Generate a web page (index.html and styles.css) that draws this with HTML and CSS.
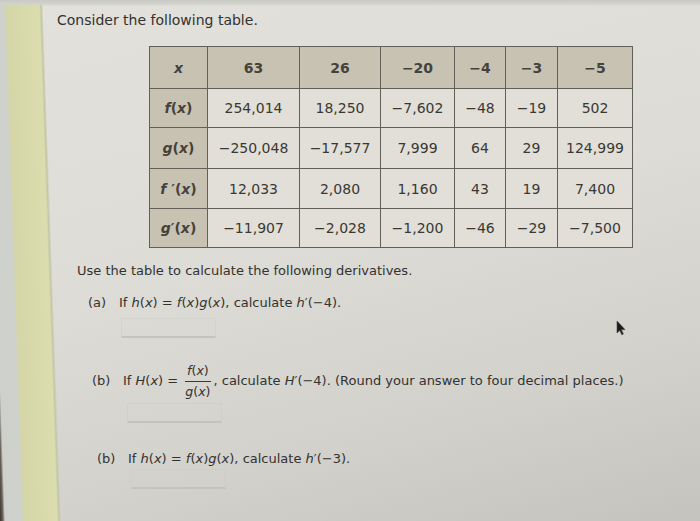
FILE: index.html
```html
<!DOCTYPE html>
<html lang="en">
<head>
<meta charset="utf-8">
<title>Consider the following table</title>
<link rel="stylesheet" href="styles.css">
</head>
<body>
<div class="screen">
  <div class="content">
    <p class="intro">Consider the following table.</p>
    <table class="data">
      <tr class="r-head">
        <th class="lab"><i>x</i></th><th>63</th><th>26</th><th>−20</th><th>−4</th><th>−3</th><th>−5</th>
      </tr>
      <tr class="r1">
        <th class="lab"><i>f</i>(<i>x</i>)</th><td>254,014</td><td>18,250</td><td>−7,602</td><td>−48</td><td>−19</td><td>502</td>
      </tr>
      <tr class="r2">
        <th class="lab"><i>g</i>(<i>x</i>)</th><td>−250,048</td><td>−17,577</td><td>7,999</td><td>64</td><td>29</td><td>124,999</td>
      </tr>
      <tr class="r3">
        <th class="lab"><i>f</i> ′(<i>x</i>)</th><td>12,033</td><td>2,080</td><td>1,160</td><td>43</td><td>19</td><td>7,400</td>
      </tr>
      <tr class="r4">
        <th class="lab"><i>g</i>′(<i>x</i>)</th><td>−11,907</td><td>−2,028</td><td>−1,200</td><td>−46</td><td>−29</td><td>−7,500</td>
      </tr>
    </table>
    <p class="prompt">Use the table to calculate the following derivatives.</p>

    <div class="part part-a">
      <div class="q"><span class="lbl">(a)</span>If <i>h</i>(<i>x</i>) = <i>f</i>(<i>x</i>)<i>g</i>(<i>x</i>), calculate <i>h</i>′(−4).</div>
      <div class="answer"></div>
    </div>

    <div class="part part-b">
      <div class="q"><span class="lbl">(b)</span>If <i>H</i>(<i>x</i>) = <span class="frac"><span class="num"><i>f</i>(<i>x</i>)</span><span class="den"><i>g</i>(<i>x</i>)</span></span>, calculate <i>H</i>′(−4). (Round your answer to four decimal places.)</div>
      <div class="answer"></div>
    </div>

    <div class="part part-c">
      <div class="q"><span class="lbl">(b)</span>If <i>h</i>(<i>x</i>) = <i>f</i>(<i>x</i>)<i>g</i>(<i>x</i>), calculate <i>h</i>′(−3).</div>
      <div class="answer"></div>
    </div>
  </div>
  <svg class="cursor" width="10" height="16" viewBox="0 0 10 16">
    <path d="M1 1 L1 13 L3.8 10.4 L5.8 14.8 L7.4 14.1 L5.4 9.8 L9 9.6 Z" fill="#1c1c1c" stroke="#444" stroke-width="0.6"/>
  </svg>
</div>
</body>
</html>
```

FILE: styles.css
```css
html, body {
  margin: 0;
  padding: 0;
}

body {
  width: 700px;
  height: 521px;
  overflow: hidden;
  font-family: "DejaVu Sans", Verdana, sans-serif;
  color: #33322f;
}

.screen {
  position: relative;
  width: 700px;
  height: 521px;
  overflow: hidden;
  background:
    linear-gradient(180deg, #c9c9c4 0, #d3d3ce 4px, rgba(0,0,0,0) 6px),
    linear-gradient(88deg, #3d3128 0, #6a655e 3px, #cdd0cb 5px, #cfd1cc 22px, #d4d6a8 24px, #dbddae 57px, #c4c6a8 59px, rgba(0,0,0,0) 61px),
    linear-gradient(165deg, #e2e1dc 0%, #dddcd7 45%, #d2d1cc 75%, #c4c3be 100%);
}

.content {
  padding: 0;
}

.intro {
  margin: 10px 0 0 57px;
  font-size: 14px;
  line-height: 20px;
}

.data {
  margin: 16px 0 0 149px;
  border-collapse: collapse;
  font-size: 14px;
  color: #3a3833;
}

.data th,
.data td {
  border: 1px solid #625f59;
  padding: 0;
  text-align: center;
  background: #e1dfd8;
}

.data th {
  background: #c8c2b2;
  font-weight: bold;
  color: #45423c;
}

.data th.lab {
  width: 57px;
}

.data .r-head th:nth-child(2) { width: 91px; }
.data .r-head th:nth-child(3) { width: 80px; }
.data .r-head th:nth-child(4) { width: 73px; }
.data .r-head th:nth-child(5) { width: 50px; }
.data .r-head th:nth-child(6) { width: 51px; }
.data .r-head th:nth-child(7) { width: 74px; }

.data .r-head { height: 42px; }
.data .r1 { height: 39px; }
.data .r2 { height: 41px; }
.data .r3 { height: 40px; }
.data .r4 { height: 39px; }

.prompt {
  margin: 13px 0 0 77px;
  font-size: 13px;
  line-height: 20px;
}

.part .q {
  font-size: 13px;
  line-height: 20px;
  white-space: nowrap;
}

.lbl {
  display: inline-block;
  width: 31px;
}

.part-a {
  margin: 12px 0 0 88px;
}

.part-a .answer {
  margin: 5px 0 0 33px;
}

.part-b {
  margin: 24px 0 0 92px;
}

.part-b .answer {
  margin: 2px 0 0 35px;
}

.part-c {
  margin: 26px 0 0 97px;
}

.part-c .answer {
  margin: 0 0 0 34px;
}

.answer {
  width: 95px;
  height: 20px;
  border: 1px solid rgba(200, 200, 195, 0.35);
  border-bottom: 2px solid #c4c4be;
  box-sizing: border-box;
}

.frac {
  display: inline-flex;
  flex-direction: column;
  align-items: center;
  vertical-align: middle;
  font-size: 12.5px;
  line-height: 18px;
  margin: 0 1px;
}

.frac .num {
  border-bottom: 1px solid #3a3a37;
  padding: 0 2px 1px;
}

.frac .den {
  padding: 1px 2px 0;
}

.cursor {
  position: absolute;
  left: 616px;
  top: 320px;
}
```
